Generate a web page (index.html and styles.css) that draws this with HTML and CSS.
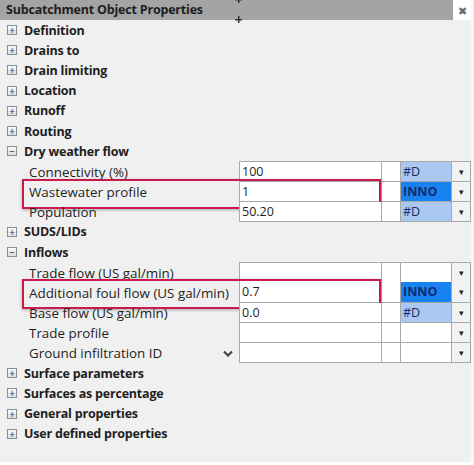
FILE: index.html
```html
<!DOCTYPE html>
<html lang="en">
<head>
  <meta charset="UTF-8" />
  <title>Subcatchment Object Properties</title>
  <link rel="stylesheet" href="styles.css">
</head>
<body>
  <div class="panel">
    <div class="titlebar">
      <span class="title">Subcatchment Object Properties</span>
      <span class="close">&#x2716;</span>
      <span class="dock top"></span>
      <span class="dock bottom"></span>
    </div>

    <div class="rows">
      <div class="cat"><span class="exp">+</span>Definition</div>
      <div class="cat"><span class="exp">+</span>Drains to</div>
      <div class="cat"><span class="exp">+</span>Drain limiting</div>
      <div class="cat"><span class="exp">+</span>Location</div>
      <div class="cat"><span class="exp">+</span>Runoff</div>
      <div class="cat"><span class="exp">+</span>Routing</div>
      <div class="cat"><span class="exp">&minus;</span>Dry weather flow</div>

      <div class="prop first">
        <span class="label">Connectivity (%)</span>
        <span class="val">100</span><span class="blank"></span>
        <span class="code def">#D</span><span class="drop">&#9662;</span>
      </div>
      <div class="prop marked">
        <span class="label">Wastewater profile</span>
        <span class="val">1</span><span class="blank"></span>
        <span class="code inno">INNO</span><span class="drop">&#9662;</span>
      </div>
      <div class="prop">
        <span class="label">Population</span>
        <span class="val">50.20</span><span class="blank"></span>
        <span class="code def">#D</span><span class="drop">&#9662;</span>
      </div>

      <div class="cat"><span class="exp">+</span>SUDS/LIDs</div>
      <div class="cat"><span class="exp">&minus;</span>Inflows</div>

      <div class="prop first">
        <span class="label">Trade flow (US gal/min)</span>
        <span class="val"></span><span class="blank"></span>
        <span class="code"></span><span class="drop">&#9662;</span>
      </div>
      <div class="prop marked">
        <span class="label">Additional foul flow (US gal/min)</span>
        <span class="val">0.7</span><span class="blank"></span>
        <span class="code inno">INNO</span><span class="drop">&#9662;</span>
      </div>
      <div class="prop">
        <span class="label">Base flow (US gal/min)</span>
        <span class="val">0.0</span><span class="blank"></span>
        <span class="code def">#D</span><span class="drop">&#9662;</span>
      </div>
      <div class="prop">
        <span class="label">Trade profile</span>
        <span class="val"></span><span class="blank"></span>
        <span class="code"></span><span class="drop">&#9662;</span>
      </div>
      <div class="prop">
        <span class="label">Ground infiltration ID
          <svg class="chev" width="10" height="7" viewBox="0 0 10 7"><path d="M1 1.5 L5 5.5 L9 1.5" fill="none" stroke="#444" stroke-width="2.2"/></svg>
        </span>
        <span class="val"></span><span class="blank"></span>
        <span class="code"></span><span class="drop">&#9662;</span>
      </div>

      <div class="cat"><span class="exp">+</span>Surface parameters</div>
      <div class="cat"><span class="exp">+</span>Surfaces as percentage</div>
      <div class="cat"><span class="exp">+</span>General properties</div>
      <div class="cat"><span class="exp">+</span>User defined properties</div>
    </div>
  </div>
</body>
</html>
```

FILE: styles.css
```css
/* RESET */
* {
  margin: 0;
  padding: 0;
  box-sizing: border-box;
}

body {
  width: 474px;
  height: 465px;
  background: #fff;
  font-family: "Open Sans", "Noto Sans", sans-serif;
  color: #1e1e1e;
}

.panel {
  width: 474px;
  height: 462px;
  background: #f0f0f0;
  border-right: 3px solid #f7f7f7;
}

/* TITLE */
.titlebar {
  position: relative;
  display: flex;
  height: 20px;
}
.title {
  width: 453px;
  background: #a4a4a4;
  font-weight: 700;
  font-size: 12.5px;
  line-height: 20px;
  padding-left: 6px;
  letter-spacing: -0.2px;
}
.close {
  width: 18px;
  background: #fff;
  color: #6b6b6b;
  font-size: 11px;
  line-height: 22px;
  text-align: center;
}
/* dock guide marks */
.dock {
  position: absolute;
  left: 235px;
  width: 7px;
  height: 7px;
  background:
    linear-gradient(#333, #333) center / 7px 1.5px no-repeat,
    linear-gradient(#333, #333) center / 1.5px 7px no-repeat;
}
.dock.top { top: -4px; }
.dock.bottom { top: 16px; }

/* ROWS */
.cat {
  display: flex;
  align-items: center;
  height: 20.2px;
  font-size: 12.5px;
  font-weight: 700;
  letter-spacing: -0.2px;
}
.exp {
  width: 10px;
  height: 10px;
  margin: 0 7px 0 7px;
  border: 1px solid #8d8d8d;
  background: linear-gradient(#fafafa, #dedede);
  color: #333;
  font-size: 10px;
  font-weight: 400;
  line-height: 8px;
  text-align: center;
}

.prop {
  position: relative;
  display: grid;
  grid-template-columns: 239px 143px 19px 51px 19px;
  height: 20.2px;
  font-size: 13.4px;
}
.prop > span {
  white-space: nowrap;
}
.prop > .val,
.prop > .blank,
.prop > .code,
.prop > .drop {
  background: #fff;
  border-right: 1px solid #a9a9a9;
  border-bottom: 1px solid #a9a9a9;
  line-height: 19px;
  padding-left: 2px;
  font-size: 12.5px;
}
.prop > .val {
  border-left: 1px solid #a9a9a9;
}
.prop.first > .val,
.prop.first > .blank,
.prop.first > .code,
.prop.first > .drop {
  border-top: 1px solid #a9a9a9;
}
.label {
  display: flex;
  align-items: center;
  padding-left: 29px;
}
.chev {
  margin-left: auto;
  margin-right: 6px;
}

.prop > .code.def {
  background: #a9c9f2;
  color: #1c2d66;
}
.prop > .code.inno {
  background: #1882f0;
  color: #142a6e;
  font-weight: 700;
}
.prop > .drop {
  background: #f2f2f2;
  color: #222;
  font-size: 9px;
  text-align: center;
  padding-left: 0;
}

/* red annotation frames */
.prop.marked::after {
  content: "";
  position: absolute;
  left: 22px;
  top: -3px;
  width: 355px;
  height: 26px;
  border: 2.5px solid #c91a4c;
  box-shadow: 0 1px 3px rgba(0,0,0,0.3);
}
```
